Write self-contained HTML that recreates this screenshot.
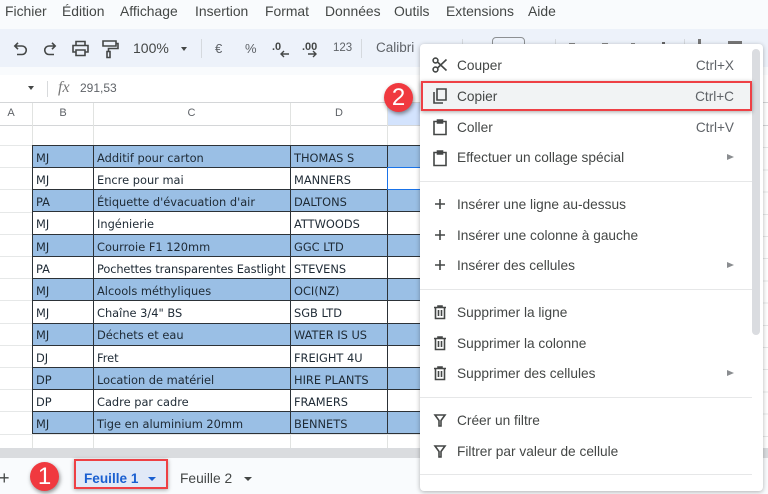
<!DOCTYPE html>
<html><head><meta charset="utf-8">
<style>
html,body{margin:0;padding:0;overflow:hidden;width:768px;height:494px}
body{background:#fff;font-family:"Liberation Sans",sans-serif;color:#444746}
#w{left:0;top:0;width:768px;height:494px;overflow:hidden;background:#fff;filter:blur(.35px)}
div,span,svg{position:absolute}
.t{white-space:nowrap;line-height:16px}
.m{font-size:13.9px;top:3px;color:#444746}
.tb{font-size:13px;top:41px;color:#5f6368}
.h{top:105px;font-size:11px;color:#5f6368;line-height:16px;text-align:center}
.vg{background:#e1e3e1;width:1px;top:125px;height:323px}
.hg{background:#e6e8e8;height:1px;left:0;width:420px}
.r{left:32px;width:388px;height:22.2px;box-sizing:border-box}
.b{background:#9abfe5}
.c{font-family:"DejaVu Sans",sans-serif;font-size:11.4px;color:#1e2a35;line-height:16px;white-space:nowrap}
.l{background:#2c3237}
.mi{font-size:13.7px;color:#444746;left:457px;white-space:nowrap;line-height:16px}
.sc{font-size:13.6px;color:#5f6368;white-space:nowrap;line-height:16px;right:34px}
.ar{left:727px;width:0;height:0;border-left:7px solid #8a8d90;border-top:3.5px solid transparent;border-bottom:3.5px solid transparent}
.sep{left:420px;width:332px;height:1px;background:#e6e7e8}
.ic{left:431px;width:18px;height:18px;fill:none;stroke:#444746;stroke-width:1.6}
.badge{width:29px;height:29px;border-radius:50%;background:#f0393f;color:#fff;font-size:24px;line-height:29px;text-align:center;box-shadow:1px 2px 4px rgba(0,0,0,.45)}
</style></head>
<body>
<div id="w">
<!-- top bars -->
<div style="left:0;top:0;width:768px;height:75px;background:#f9fbfd"></div>
<div style="left:0;top:29px;width:768px;height:38px;background:#edf2fa"></div>
<span class="t m" style="left:5px">Fichier</span>
<span class="t m" style="left:62px">Édition</span>
<span class="t m" style="left:120px">Affichage</span>
<span class="t m" style="left:195px">Insertion</span>
<span class="t m" style="left:265px">Format</span>
<span class="t m" style="left:325px">Données</span>
<span class="t m" style="left:394px">Outils</span>
<span class="t m" style="left:446px">Extensions</span>
<span class="t m" style="left:528px">Aide</span>

<!-- toolbar icons -->
<svg style="left:12px;top:40px" width="110" height="20" viewBox="0 0 110 20" fill="none" stroke="#444746" stroke-width="1.6">
<path d="M3 6h7a4.200 4.200 0 0 1 0 8.500H5M6 2.800L2.800 6 6 9.200"/>
<path d="M43 6h-6a4.200 4.200 0 0 0 0 8.500h5M40 2.800L43.200 6 40 9.200"/>
<path d="M64 5V1.500h9V5M64 12h-3V5.500h15V12h-3M64 10h9v5.500h-9z"/>
<path d="M91 1h13v5H91zM104 3.500h2v5h-9.500v3M95 11.500h3v6h-3z"/>
</svg>
<span class="t tb" style="left:133px;font-size:14px;color:#444746;top:40px">100%</span>
<div style="left:181px;top:47px;border-top:4px solid #444746;border-left:3.500px solid transparent;border-right:3.500px solid transparent"></div>
<div style="left:201px;top:39px;width:1px;height:19px;background:#d5d9de"></div>
<span class="t tb" style="left:215px">€</span>
<span class="t tb" style="left:245px">%</span>
<span class="t" style="left:272px;top:39px;font-size:11px;font-weight:bold;color:#444746">.0</span>
<svg style="left:279px;top:50px" width="12" height="8" fill="none" stroke="#444746" stroke-width="1.400"><path d="M10 4H2M5 1L2 4l3 3"/></svg>
<span class="t" style="left:302px;top:39px;font-size:11px;font-weight:bold;color:#444746">.00</span>
<svg style="left:307px;top:50px" width="12" height="8" fill="none" stroke="#444746" stroke-width="1.400"><path d="M1 4h8M6 1l3 3-3 3"/></svg>
<span class="t" style="left:333px;top:40px;font-size:11.500px;color:#5f6368">123</span>
<div style="left:361px;top:39px;width:1px;height:19px;background:#d5d9de"></div>
<span class="t tb" style="left:376px;font-size:13.500px;top:40px">Calibri</span>
<div style="left:462px;top:39px;width:1px;height:10px;background:#d5d9de"></div>
<div style="left:492px;top:37px;width:33px;height:12px;border:1px solid #8d9093;border-radius:4px;box-sizing:border-box"></div>
<div style="left:555px;top:39px;width:1px;height:10px;background:#d5d9de"></div>
<div style="left:684px;top:39px;width:1px;height:10px;background:#d5d9de"></div>
<div style="left:569px;top:43px;width:6px;height:1px;background:#888"></div>
<div style="left:602px;top:43px;width:6px;height:1px;background:#888"></div>
<div style="left:631px;top:43px;width:4px;height:1px;background:#888"></div>
<div style="left:662px;top:42px;width:3px;height:2px;background:#666"></div>
<div style="left:698px;top:39px;width:3px;height:5px;background:#777"></div>
<div style="left:728px;top:41px;width:14px;height:3px;background:#777"></div>

<!-- formula bar -->
<div style="left:0;top:75px;width:768px;height:27px;background:#fff"></div>
<div style="left:28px;top:86px;border-top:4px solid #444746;border-left:3.500px solid transparent;border-right:3.500px solid transparent"></div>
<div style="left:47px;top:81px;width:1px;height:16px;background:#d8dadc"></div>
<span class="t" style="left:58px;top:80px;font-family:'Liberation Serif',serif;font-style:italic;font-size:16px;color:#777">fx</span>
<span class="t" style="left:80px;top:80px;font-size:12px;color:#5f6368">291,53</span>

<!-- column headers -->
<div style="left:0;top:102px;width:768px;height:1px;background:#d4d6d8"></div>
<div style="left:0;top:125px;width:768px;height:1px;background:#d4d6d8"></div>
<div style="left:387px;top:103px;width:33px;height:22px;background:#d3e3fd"></div>
<span class="h" style="left:0;width:22px">A</span>
<span class="h" style="left:33px;width:60px">B</span>
<span class="h" style="left:93px;width:197px">C</span>
<span class="h" style="left:291px;width:96px">D</span>
<div class="vg" style="left:32px;top:103px;height:345px"></div>
<div class="vg" style="left:93px;top:103px;height:345px"></div>
<div class="vg" style="left:290px;top:103px;height:345px"></div>
<div class="vg" style="left:387px;top:103px;height:345px"></div>

<!-- grid left lines -->
<div class="hg" style="top:145px;width:32px"></div>
<div class="hg" style="top:167px;width:32px"></div>
<div class="hg" style="top:189px;width:32px"></div>
<div class="hg" style="top:212px;width:32px"></div>
<div class="hg" style="top:234px;width:32px"></div>
<div class="hg" style="top:256px;width:32px"></div>
<div class="hg" style="top:278px;width:32px"></div>
<div class="hg" style="top:300px;width:32px"></div>
<div class="hg" style="top:323px;width:32px"></div>
<div class="hg" style="top:345px;width:32px"></div>
<div class="hg" style="top:367px;width:32px"></div>
<div class="hg" style="top:389px;width:32px"></div>
<div class="hg" style="top:411px;width:32px"></div>
<div class="hg" style="top:434px;width:420px"></div>
<!-- grid right of the menu -->
<div style="left:760px;top:126px;width:8px;height:322px;background:repeating-linear-gradient(to bottom,#fff 0,#fff 21.200px,#e6e8e8 21.200px,#e6e8e8 22.200px)"></div>

<!-- blue rows -->
<div class="r b" style="top:146px;height:22px"></div>
<div class="r b" style="top:190px;height:22px"></div>
<div class="r b" style="top:235px;height:22px"></div>
<div class="r b" style="top:279px;height:22px"></div>
<div class="r b" style="top:324px;height:22px"></div>
<div class="r b" style="top:368px;height:22px"></div>
<div class="r b" style="top:412px;height:22px"></div>

<!-- table borders -->
<div class="l" style="left:32px;width:388px;top:145px;height:1px"></div>
<div class="l" style="left:32px;width:388px;top:167px;height:1px"></div>
<div class="l" style="left:32px;width:388px;top:189px;height:1px"></div>
<div class="l" style="left:32px;width:388px;top:211px;height:1px"></div>
<div class="l" style="left:32px;width:388px;top:234px;height:1px"></div>
<div class="l" style="left:32px;width:388px;top:256px;height:1px"></div>
<div class="l" style="left:32px;width:388px;top:278px;height:1px"></div>
<div class="l" style="left:32px;width:388px;top:300px;height:1px"></div>
<div class="l" style="left:32px;width:388px;top:323px;height:1px"></div>
<div class="l" style="left:32px;width:388px;top:345px;height:1px"></div>
<div class="l" style="left:32px;width:388px;top:367px;height:1px"></div>
<div class="l" style="left:32px;width:388px;top:389px;height:1px"></div>
<div class="l" style="left:32px;width:388px;top:411px;height:1px"></div>
<div class="l" style="left:32px;width:388px;top:433px;height:1px"></div>
<div class="l" style="left:32px;top:145px;width:1px;height:289px"></div>
<div class="l" style="left:93px;top:145px;width:1px;height:289px"></div>
<div class="l" style="left:290px;top:145px;width:1px;height:289px"></div>
<div class="l" style="left:387px;top:145px;width:1px;height:289px"></div>
<!-- selected cell -->
<div style="left:387px;top:167px;width:40px;height:23px;border:1.500px solid #1a73e8;box-sizing:border-box"></div>

<!-- cells -->
<span class="c" style="left:36px;top:150px">MJ</span><span class="c" style="left:97px;top:150px">Additif pour carton</span><span class="c" style="left:294px;top:150px">THOMAS S</span>
<span class="c" style="left:36px;top:172px">MJ</span><span class="c" style="left:97px;top:172px">Encre pour mai</span><span class="c" style="left:294px;top:172px">MANNERS</span>
<span class="c" style="left:36px;top:194px">PA</span><span class="c" style="left:97px;top:194px">Étiquette d'évacuation d'air</span><span class="c" style="left:294px;top:194px">DALTONS</span>
<span class="c" style="left:36px;top:216px">MJ</span><span class="c" style="left:97px;top:216px">Ingénierie</span><span class="c" style="left:294px;top:216px">ATTWOODS</span>
<span class="c" style="left:36px;top:239px">MJ</span><span class="c" style="left:97px;top:239px">Courroie F1 120mm</span><span class="c" style="left:294px;top:239px">GGC LTD</span>
<span class="c" style="left:36px;top:261px">PA</span><span class="c" style="left:97px;top:261px;letter-spacing:-.12px">Pochettes transparentes Eastlight</span><span class="c" style="left:294px;top:261px">STEVENS</span>
<span class="c" style="left:36px;top:283px">MJ</span><span class="c" style="left:97px;top:283px">Alcools méthyliques</span><span class="c" style="left:294px;top:283px">OCI(NZ)</span>
<span class="c" style="left:36px;top:305px">MJ</span><span class="c" style="left:97px;top:305px">Chaîne 3/4" BS</span><span class="c" style="left:294px;top:305px">SGB LTD</span>
<span class="c" style="left:36px;top:327px">MJ</span><span class="c" style="left:97px;top:327px">Déchets et eau</span><span class="c" style="left:294px;top:327px">WATER IS US</span>
<span class="c" style="left:36px;top:350px">DJ</span><span class="c" style="left:97px;top:350px">Fret</span><span class="c" style="left:294px;top:350px">FREIGHT 4U</span>
<span class="c" style="left:36px;top:372px">DP</span><span class="c" style="left:97px;top:372px">Location de matériel</span><span class="c" style="left:294px;top:372px">HIRE PLANTS</span>
<span class="c" style="left:36px;top:394px">DP</span><span class="c" style="left:97px;top:394px">Cadre par cadre</span><span class="c" style="left:294px;top:394px">FRAMERS</span>
<span class="c" style="left:36px;top:416px">MJ</span><span class="c" style="left:97px;top:416px">Tige en aluminium 20mm</span><span class="c" style="left:294px;top:416px">BENNETS</span>

<!-- bottom -->
<div style="left:0;top:448px;width:768px;height:10px;background:#dadcdf"></div>
<div style="left:0;top:458px;width:768px;height:36px;background:#f9fbfd"></div>
<span class="t" style="left:-1px;top:470px;font-size:18px;color:#444746">+</span>
<div style="left:74px;top:459px;width:94px;height:30px;background:#e1e9f7;border:2px solid #ee4045;box-sizing:border-box;box-shadow:0 1px 4px rgba(0,0,0,.35)"></div>
<span class="t" style="left:84px;top:471px;font-size:13.600px;font-weight:bold;color:#1a5fd0">Feuille 1</span>
<div style="left:148px;top:477px;border-top:4px solid #1a5fd0;border-left:4px solid transparent;border-right:4px solid transparent"></div>
<span class="t" style="left:180px;top:471px;font-size:13.800px;color:#444746">Feuille 2</span>
<div style="left:244px;top:477px;border-top:4px solid #444746;border-left:4px solid transparent;border-right:4px solid transparent"></div>
<div class="badge" style="left:30px;top:462px">1</div>

<!-- context menu -->
<div style="left:420px;top:44px;width:343px;height:447px;background:#fff;border-radius:4px;box-shadow:0 1px 5px rgba(0,0,0,.3)"></div>
<div style="left:752px;top:49px;width:8px;height:286px;background:#dadce0;border-radius:4px"></div>

<div style="left:420px;top:81px;width:332px;height:30px;background:#f1f3f4"></div>
<div style="left:421px;top:81px;width:331px;height:30px;border:2px solid #ee4045;box-sizing:border-box;box-shadow:0 1px 4px rgba(0,0,0,.35)"></div>

<svg class="ic" style="top:56px" viewBox="0 0 18 18"><circle cx="4.500" cy="4.500" r="2.400"/><circle cx="4.500" cy="13.500" r="2.400"/><path d="M6.500 6L15.500 14.500M6.500 12L15.500 3.500"/></svg>
<span class="mi" style="top:58px">Couper</span><span class="sc" style="top:58px">Ctrl+X</span>

<svg class="ic" style="top:87px" viewBox="0 0 18 18"><path d="M6 2h9v11H6zM3 5v11h9"/></svg>
<span class="mi" style="top:89px">Copier</span><span class="sc" style="top:89px">Ctrl+C</span>

<svg class="ic" style="top:118px" viewBox="0 0 18 18"><path d="M6.500 3.500H3v13h12v-13h-3.500"/><path d="M6.500 2h5v3h-5z" fill="#444746"/></svg>
<span class="mi" style="top:120px">Coller</span><span class="sc" style="top:120px">Ctrl+V</span>

<svg class="ic" style="top:149px" viewBox="0 0 18 18"><path d="M6.500 3.500H3v13h12v-13h-3.500"/><path d="M6.500 2h5v3h-5z" fill="#444746"/></svg>
<span class="mi" style="top:150px">Effectuer un collage spécial</span><div class="ar" style="top:154px"></div>

<div class="sep" style="top:181px"></div>

<svg class="ic" style="top:195px" viewBox="0 0 18 18"><path d="M9 4v10M4 9h10"/></svg>
<span class="mi" style="top:197px">Insérer une ligne au-dessus</span>
<svg class="ic" style="top:226px" viewBox="0 0 18 18"><path d="M9 4v10M4 9h10"/></svg>
<span class="mi" style="top:228px">Insérer une colonne à gauche</span>
<svg class="ic" style="top:256px" viewBox="0 0 18 18"><path d="M9 4v10M4 9h10"/></svg>
<span class="mi" style="top:258px">Insérer des cellules</span><div class="ar" style="top:262px"></div>

<div class="sep" style="top:289px"></div>

<svg class="ic" style="top:303px" viewBox="0 0 18 18"><path d="M3 4.500h12M7 4.500V3h4v1.500M4.500 4.500V15.500h9V4.500M7.500 7v6M10.500 7v6"/></svg>
<span class="mi" style="top:305px">Supprimer la ligne</span>
<svg class="ic" style="top:334px" viewBox="0 0 18 18"><path d="M3 4.500h12M7 4.500V3h4v1.500M4.500 4.500V15.500h9V4.500M7.500 7v6M10.500 7v6"/></svg>
<span class="mi" style="top:336px">Supprimer la colonne</span>
<svg class="ic" style="top:364px" viewBox="0 0 18 18"><path d="M3 4.500h12M7 4.500V3h4v1.500M4.500 4.500V15.500h9V4.500M7.500 7v6M10.500 7v6"/></svg>
<span class="mi" style="top:366px">Supprimer des cellules</span><div class="ar" style="top:370px"></div>

<div class="sep" style="top:397px"></div>

<svg class="ic" style="top:411px" viewBox="0 0 18 18"><path d="M4 4h10L10 9.500V15H8V9.500z"/></svg>
<span class="mi" style="top:413px">Créer un filtre</span>
<svg class="ic" style="top:442px" viewBox="0 0 18 18"><path d="M4 4h10L10 9.500V15H8V9.500z"/></svg>
<span class="mi" style="top:444px">Filtrer par valeur de cellule</span>

<div class="sep" style="top:474px"></div>

<div class="badge" style="left:384px;top:83px">2</div>
</div>
</body></html>
